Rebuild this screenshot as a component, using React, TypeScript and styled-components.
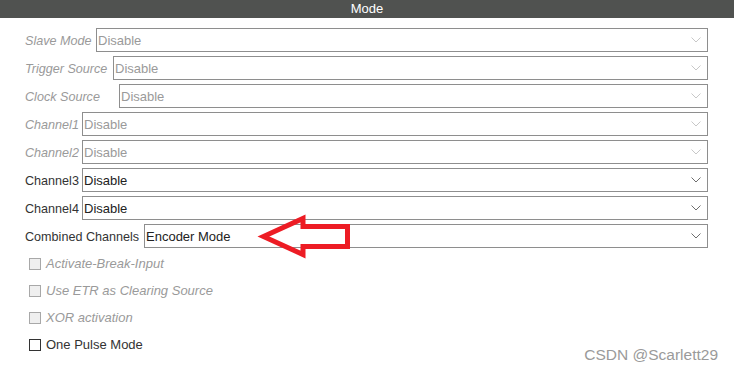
import React from "react";
import styled, { createGlobalStyle } from "styled-components";

const Global = createGlobalStyle`
  html, body {
    margin: 0;
    padding: 0;
    background: #fff;
  }
  body {
    font-family: "Liberation Sans", Arial, sans-serif;
    font-size: 13px;
  }
`;

const Panel = styled.div`
  position: relative;
  width: 734px;
  height: 371px;
  overflow: hidden;
  background: #fff;
`;

const TitleBar = styled.div`
  height: 18px;
  background: #505250;
  color: #fff;
  font-size: 13px;
  line-height: 18px;
  text-align: center;
`;

const Form = styled.div`
  display: flex;
  flex-direction: column;
  gap: 4px;
  padding: 10px 26px 0 25px;
`;

const Row = styled.div`
  display: flex;
  align-items: center;
  height: 24px;
`;

const Label = styled.span<{ $disabled?: boolean; $width: number }>`
  flex: none;
  width: ${(p) => p.$width}px;
  padding-top: 1px;
  font-size: 12.6px;
  color: ${(p) => (p.$disabled ? "#9a9a9a" : "#333")};
  font-style: ${(p) => (p.$disabled ? "italic" : "normal")};
  white-space: nowrap;
`;

const Select = styled.div<{ $disabled?: boolean }>`
  flex: 1;
  height: 24px;
  box-sizing: border-box;
  border: 1px solid #8e8e8e;
  display: flex;
  align-items: center;
  justify-content: space-between;
  padding: 0 6px 0 1px;
  color: ${(p) => (p.$disabled ? "#9a9a9a" : "#222")};
  svg polyline {
    stroke: ${(p) => (p.$disabled ? "#c8c8c8" : "#6e6e6e")};
  }
`;

const Checks = styled.div`
  display: flex;
  flex-direction: column;
  padding: 2px 0 0 29px;
`;

const CheckRow = styled.div<{ $disabled?: boolean }>`
  display: flex;
  align-items: center;
  height: 27px;
  gap: 5px;
  color: ${(p) => (p.$disabled ? "#9a9a9a" : "#333")};
  font-style: ${(p) => (p.$disabled ? "italic" : "normal")};
`;

const Box = styled.span<{ $disabled?: boolean }>`
  width: 12px;
  height: 12px;
  box-sizing: border-box;
  border: 1px solid ${(p) => (p.$disabled ? "#a8a8a8" : "#333")};
  background: ${(p) => (p.$disabled ? "#efefef" : "#fff")};
`;

const Watermark = styled.div`
  position: absolute;
  right: 16px;
  bottom: 7px;
  font-family: "Liberation Sans", Arial, sans-serif;
  font-size: 15.5px;
  color: #9a9a9a;
`;

const Arrow = styled.svg`
  position: absolute;
  left: 250px;
  top: 210px;
`;

const Chevron = () => (
  <svg width="10" height="6" viewBox="0 0 10 6">
    <polyline points="0.5,0.5 5,5 9.5,0.5" fill="none" strokeWidth="1" />
  </svg>
);

type Field = { label: string; value: string; width: number; disabled?: boolean };

const fields: Field[] = [
  { label: "Slave Mode", value: "Disable", width: 71, disabled: true },
  { label: "Trigger Source", value: "Disable", width: 88, disabled: true },
  { label: "Clock Source", value: "Disable", width: 94, disabled: true },
  { label: "Channel1", value: "Disable", width: 57, disabled: true },
  { label: "Channel2", value: "Disable", width: 57, disabled: true },
  { label: "Channel3", value: "Disable", width: 57 },
  { label: "Channel4", value: "Disable", width: 57 },
  { label: "Combined Channels", value: "Encoder Mode", width: 119 },
];

const checks = [
  { label: "Activate-Break-Input", disabled: true },
  { label: "Use ETR as Clearing Source", disabled: true },
  { label: "XOR activation", disabled: true },
  { label: "One Pulse Mode" },
];

export default function App() {
  return (
    <Panel>
      <Global />
      <TitleBar>Mode</TitleBar>
      <Form>
        {fields.map((f) => (
          <Row key={f.label}>
            <Label $disabled={f.disabled} $width={f.width}>
              {f.label}
            </Label>
            <Select $disabled={f.disabled}>
              <span>{f.value}</span>
              <Chevron />
            </Select>
          </Row>
        ))}
      </Form>
      <Checks>
        {checks.map((c) => (
          <CheckRow key={c.label} $disabled={c.disabled}>
            <Box $disabled={c.disabled} />
            <span>{c.label}</span>
          </CheckRow>
        ))}
      </Checks>
      <Arrow width="104" height="52" viewBox="0 0 104 52">
        <polygon
          points="13.5,26.5 53,8.5 53,16.5 97.5,16.5 97.5,36.5 53,36.5 53,44.5"
          fill="none"
          stroke="#ed1c24"
          strokeWidth="5"
        />
      </Arrow>
      <Watermark>CSDN @Scarlett29</Watermark>
    </Panel>
  );
}
